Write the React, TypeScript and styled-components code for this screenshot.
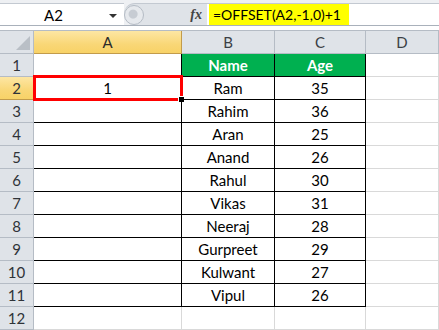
import styled, { createGlobalStyle } from "styled-components";

const GlobalStyle = createGlobalStyle`
  body {
    margin: 0;
    background: #ffffff;
    font-family: Lato, "Open Sans", sans-serif;
  }
`;

type Person = { name: string; age: number };

const people: Person[] = [
  { name: "Ram", age: 35 },
  { name: "Rahim", age: 36 },
  { name: "Aran", age: 25 },
  { name: "Anand", age: 26 },
  { name: "Rahul", age: 30 },
  { name: "Vikas", age: 31 },
  { name: "Neeraj", age: 28 },
  { name: "Gurpreet", age: 29 },
  { name: "Kulwant", age: 27 },
  { name: "Vipul", age: 26 },
];

const columns = ["A", "B", "C", "D"];

function App() {
  const rows = Array.from({ length: 12 }, (_, i) => i + 1);

  return (
    <>
      <GlobalStyle />
      <Sheet>
        <FormulaBar>
          <NameBox>
            <span>A2</span>
            <DropArrow />
          </NameBox>
          <Splitter>
            <Grip />
            <Fx>fx</Fx>
          </Splitter>
          <FormulaInput>
            <Highlight>=OFFSET(A2,-1,0)+1</Highlight>
          </FormulaInput>
        </FormulaBar>

        <Grid>
          <Corner>
            <CornerTriangle />
          </Corner>
          {columns.map((c) => (
            <ColHeader key={c} $active={c === "A"}>
              {c}
            </ColHeader>
          ))}

          {rows.map((r) => {
            const person = r >= 2 && r <= 11 ? people[r - 2] : undefined;
            const inTable = r <= 11;
            return [
              <RowHeader key={`h${r}`} $active={r === 2}>
                {r}
              </RowHeader>,
              <Cell key={`a${r}`} $right={inTable} $bottom={inTable}>
                {r === 2 && (
                  <>
                    1
                    <Selection>
                      <FillHandle />
                    </Selection>
                  </>
                )}
              </Cell>,
              r === 1 ? (
                <HeadCell key={`b${r}`}>Name</HeadCell>
              ) : (
                <Cell key={`b${r}`} $right={inTable} $bottom={inTable}>
                  {person?.name}
                </Cell>
              ),
              r === 1 ? (
                <HeadCell key={`c${r}`}>Age</HeadCell>
              ) : (
                <Cell key={`c${r}`} $right={inTable} $bottom={inTable}>
                  {person?.age}
                </Cell>
              ),
              <Cell key={`d${r}`} />,
            ];
          })}
        </Grid>
      </Sheet>
    </>
  );
}

const Sheet = styled.div`
  width: 439px;
  height: 330px;
  overflow: hidden;
  background: #ffffff;
  font-size: 15px;
  color: #000;
`;

const FormulaBar = styled.div`
  display: flex;
  height: 22px;
  padding-top: 3px;
  background: #eef0f3;
  border-bottom: 1px solid #a9b1bb;
  margin-bottom: 4px;
`;

const NameBox = styled.div`
  position: relative;
  width: 124px;
  display: flex;
  align-items: center;
  padding-right: 17px;
  box-sizing: border-box;
  justify-content: center;
  background: #ffffff;
  border-top: 1px solid #c3c9d1;
  font-size: 15px;
`;

const DropArrow = styled.span`
  position: absolute;
  right: 7px;
  top: 10px;
  width: 0;
  height: 0;
  border-left: 4px solid transparent;
  border-right: 4px solid transparent;
  border-top: 4px solid #333;
`;

const Splitter = styled.div`
  width: 83px;
  display: flex;
  align-items: center;
  justify-content: space-between;
  background: #dfe3e8;
  border-top: 1px solid #c3c9d1;
  border-radius: 11px 0 0 11px;
  padding-right: 5px;
  box-sizing: border-box;
`;

const Grip = styled.span`
  width: 20px;
  height: 20px;
  border-radius: 50%;
  border: 1px solid #b5bcc5;
  box-sizing: border-box;
  background: radial-gradient(circle at 45% 45%, #c7ccd3 0 4px, #e6e9ed 5px);
`;

const Fx = styled.span`
  font-family: "Liberation Serif", serif;
  font-style: italic;
  font-weight: bold;
  font-size: 14px;
  color: #444;
`;

const FormulaInput = styled.div`
  flex: 1;
  display: flex;
  align-items: stretch;
  background: #ffffff;
  border-top: 1px solid #c3c9d1;
  padding-left: 2px;
`;

const Highlight = styled.span`
  display: flex;
  align-items: center;
  background: #ffff00;
  width: 140px;
  padding-left: 4px;
  box-sizing: border-box;
  font-size: 14px;
  white-space: nowrap;
`;

const Grid = styled.div`
  display: grid;
  grid-template-columns: 34px 148px 93px 91px 1fr;
  grid-auto-rows: 23px;
  border-top: 1px solid #b5bcc5;
`;

const Corner = styled.div`
  position: relative;
  background: #dfe3e8;
  border-right: 1px solid #b5bcc5;
  border-bottom: 1px solid #b5bcc5;
`;

const CornerTriangle = styled.span`
  position: absolute;
  right: 3px;
  bottom: 3px;
  width: 0;
  height: 0;
  border-left: 14px solid transparent;
  border-bottom: 14px solid #b9bfc6;
`;

const ColHeader = styled.div<{ $active?: boolean }>`
  display: flex;
  align-items: center;
  justify-content: center;
  font-size: 15px;
  color: ${(p) => (p.$active ? "#2b2b2b" : "#3b3f45")};
  background: ${(p) =>
    p.$active
      ? "linear-gradient(#fde6a3, #f9d777 60%, #f8d267)"
      : "#dfe3e8"};
  border-right: 1px solid ${(p) => (p.$active ? "#c29b4b" : "#b5bcc5")};
  border-bottom: 1px solid ${(p) => (p.$active ? "#c29b4b" : "#b5bcc5")};
`;

const RowHeader = styled(ColHeader)`
  color: #2f3338;
`;

const Cell = styled.div<{ $right?: boolean; $bottom?: boolean }>`
  position: relative;
  display: flex;
  align-items: center;
  justify-content: center;
  font-size: 15px;
  border-right: 1px solid ${(p) => (p.$right ? "#000" : "#d9d9d9")};
  border-bottom: 1px solid ${(p) => (p.$bottom ? "#000" : "#d9d9d9")};
`;

const HeadCell = styled(Cell)`
  background: #00b050;
  color: #ffffff;
  font-weight: bold;
  border-right: 1px solid #000;
  border-bottom: 1px solid #000;
`;

const Selection = styled.span`
  position: absolute;
  top: -2px;
  left: -1px;
  right: -2px;
  bottom: -2px;
  border: 3px solid #ff0000;
  pointer-events: none;
`;

const FillHandle = styled.span`
  position: absolute;
  right: -5px;
  bottom: -5px;
  width: 5px;
  height: 5px;
  background: #000;
  border: 1px solid #fff;
`;

export default App;
